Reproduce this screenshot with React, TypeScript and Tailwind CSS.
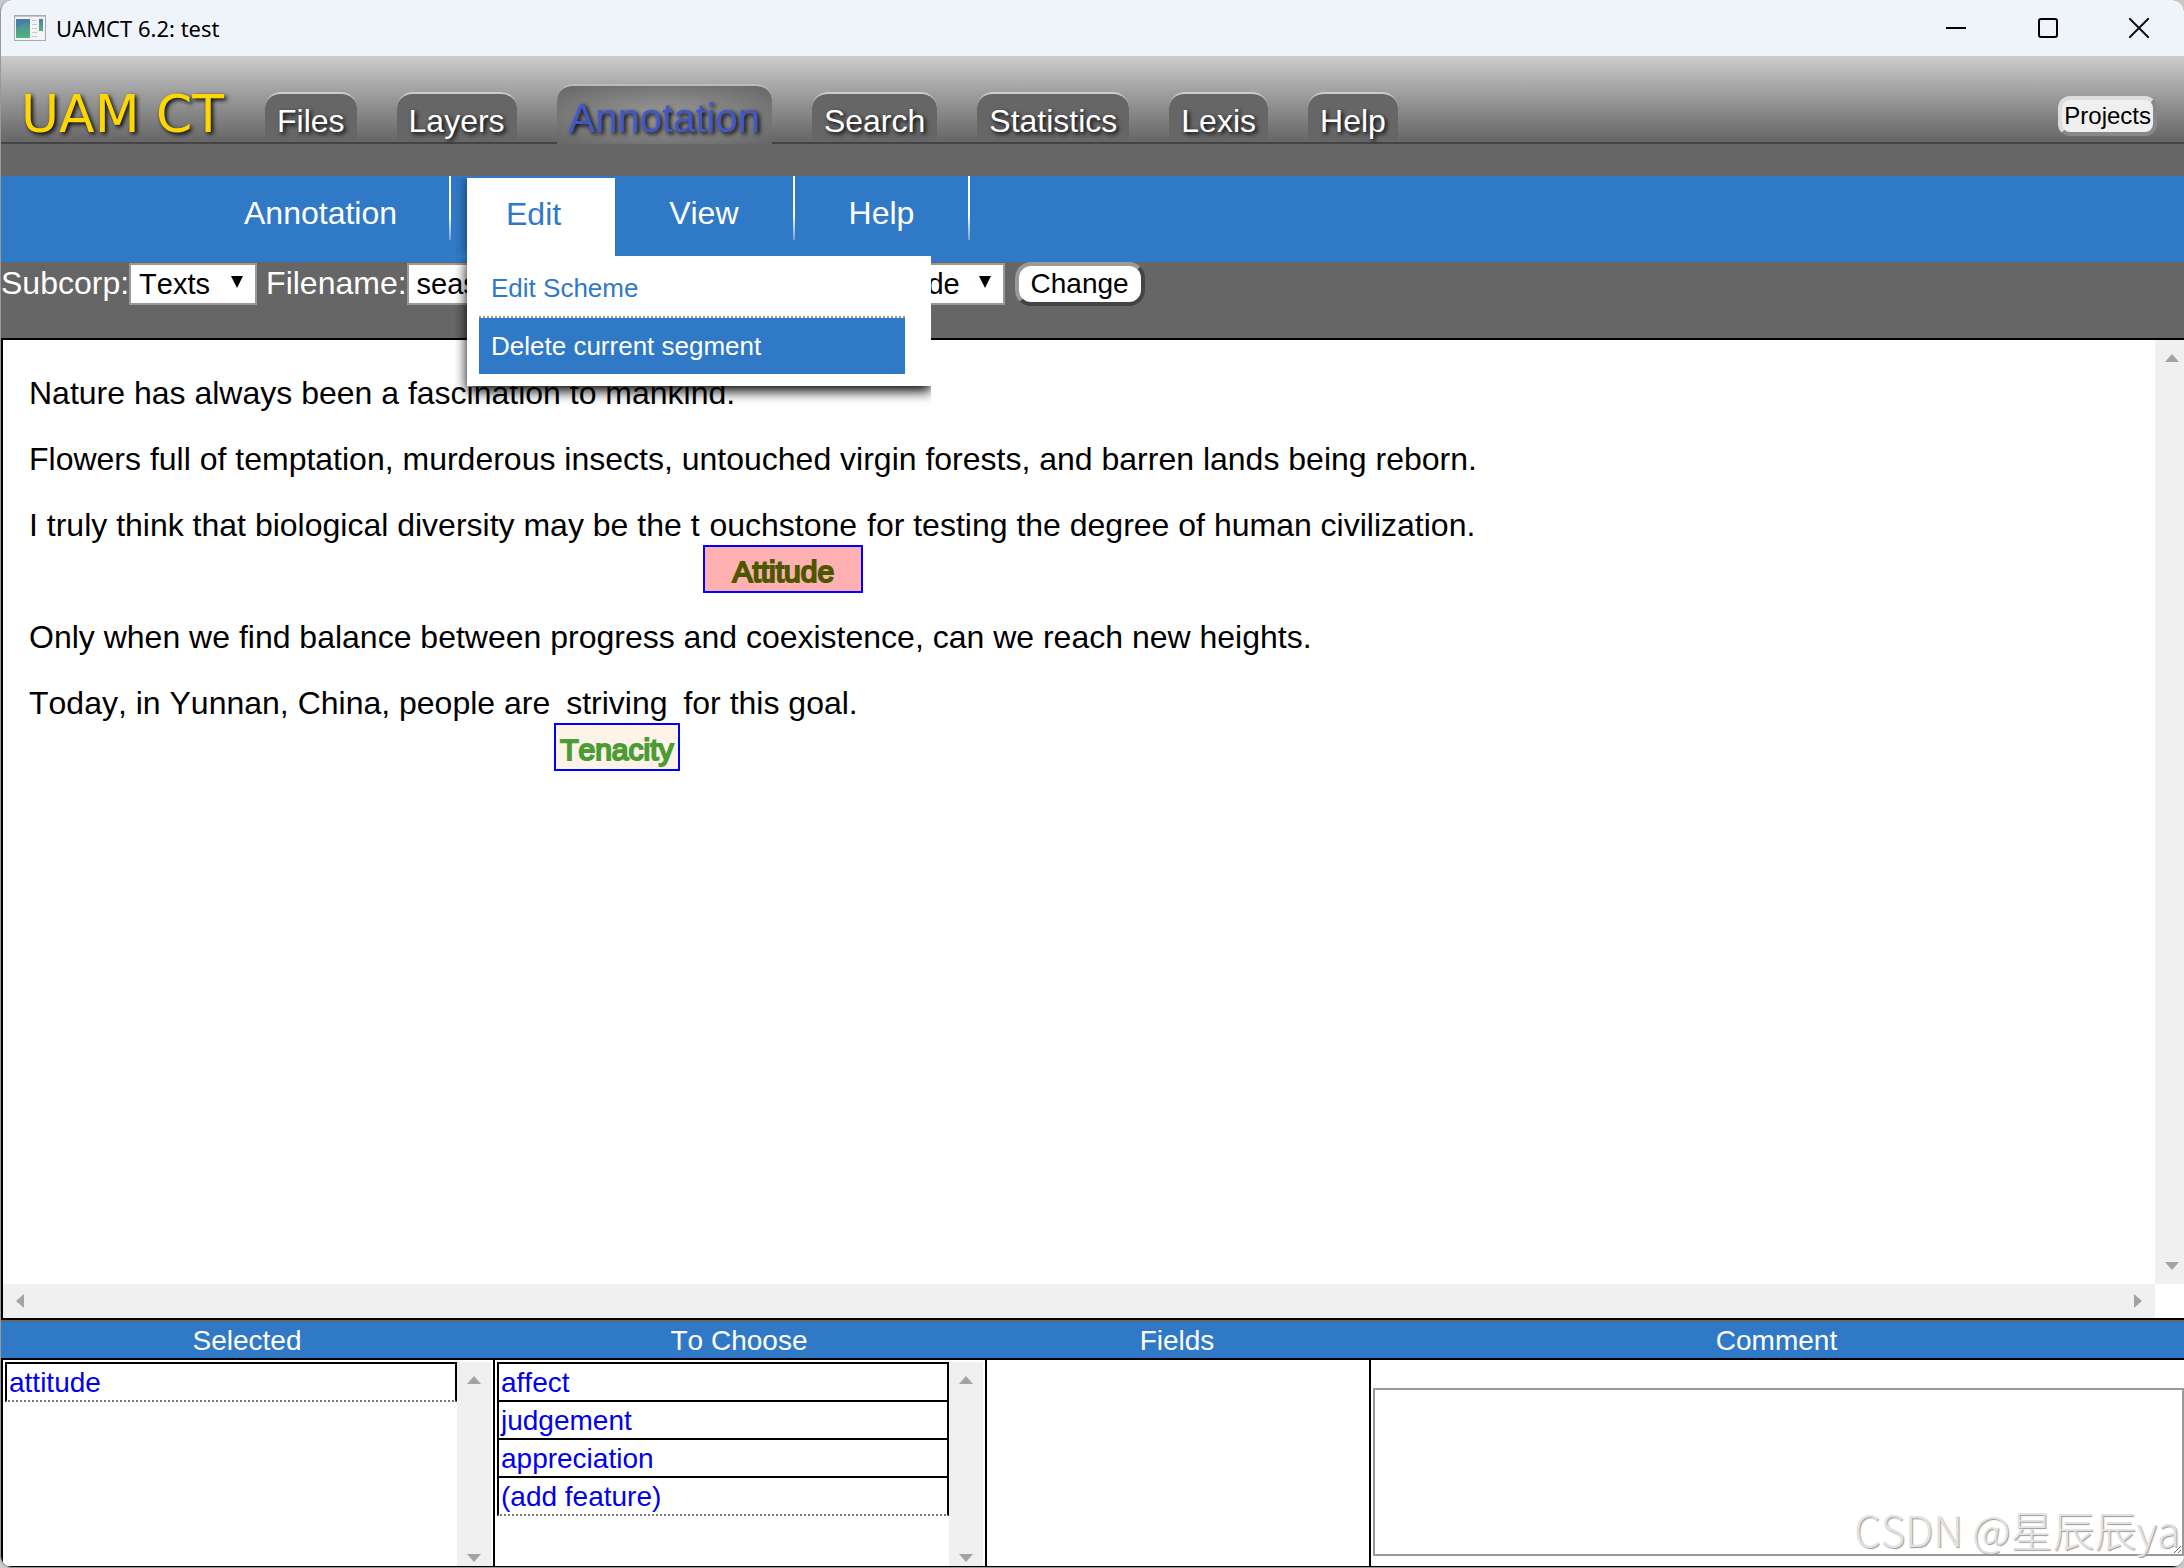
import { useState } from "react";

const tabs = ["Files", "Layers", "Annotation", "Search", "Statistics", "Lexis", "Help"];

const choices = ["affect", "judgement", "appreciation", "(add feature)"];

const WindowControls = () => (
  <div className="ml-auto flex h-full">
    <button type="button" aria-label="Minimize" className="flex w-[92px] items-center justify-center">
      <svg width="20" height="20" viewBox="0 0 20 20">
        <path d="M0 10H20" stroke="#000" strokeWidth="2" />
      </svg>
    </button>
    <button type="button" aria-label="Maximize" className="flex w-[92px] items-center justify-center">
      <svg width="20" height="20" viewBox="0 0 20 20">
        <rect x="1" y="1" width="18" height="18" rx="2" fill="none" stroke="#000" strokeWidth="2" />
      </svg>
    </button>
    <button type="button" aria-label="Close" className="flex w-[90px] items-center justify-center">
      <svg width="20" height="20" viewBox="0 0 20 20">
        <path d="M0 0L20 20M20 0L0 20" stroke="#111" strokeWidth="2" />
      </svg>
    </button>
  </div>
);

const AppIcon = () => (
  <svg width="32" height="26" viewBox="0 0 32 26">
    <defs>
      <linearGradient id="pane" x1="0" y1="0" x2="0" y2="1">
        <stop offset="0" stopColor="#4a80a8" />
        <stop offset="1" stopColor="#52b578" />
      </linearGradient>
    </defs>
    <rect x="0.5" y="0.5" width="31" height="25" fill="#f4f4f6" stroke="#a9abb0" />
    <path d="M1 1.5H31" stroke="#c4c6ca" />
    <rect x="2" y="4" width="14" height="19" fill="url(#pane)" />
    <path d="M2 14C5 9 10 8 16 8V4H2Z" fill="#3f7ba6" opacity="0.6" />
    <path d="M18 5.5H23M18 9.5H23M18 13.5H23M18 17.5H23M18 21.5H23" stroke="#c9cacd" />
    <rect x="25" y="4" width="4" height="12" fill="url(#pane)" />
  </svg>
);

const Arrow = ({ className }: { className: string }) => (
  <svg width="14" height="8" viewBox="0 0 14 8" className={className}>
    <path d="M0 8L7 0L14 8Z" fill="#a3a3a3" />
  </svg>
);

// Vertical scroll track with an arrow at each end
const VerticalTrack = () => (
  <div className="flex shrink-0 flex-col items-center justify-between bg-[#f0f0f0]">
    <Arrow className="mx-2.5 mt-3.5" />
    <Arrow className="mx-2.5 mb-1 rotate-180" />
  </div>
);

const Separator = () => (
  <span className="h-16 w-0.5 bg-linear-to-b from-white from-60% to-white/30" />
);

const SelectBox = ({
  id,
  label,
  width,
  value,
}: {
  id: string;
  label?: string;
  width: string;
  value: string;
}) => (
  <div className={`relative ${width}`}>
    <select
      id={id}
      aria-label={label}
      defaultValue={value}
      className="h-[42px] w-full appearance-none border-2 border-[#999] bg-white px-2 text-[29px] leading-[38px] text-black"
    >
      <option>{value}</option>
    </select>
    <svg
      width="12"
      height="12"
      viewBox="0 0 12 12"
      className="pointer-events-none absolute top-3.5 right-3.5"
    >
      <path d="M0 0H12L6 12Z" fill="#000" />
    </svg>
  </div>
);

const FeatureList = ({ items }: { items: string[] }) => (
  <div className="flex h-full pt-0.5 pr-0.5 pl-0.5">
    <ul className="grow self-start border-2 border-black border-b-[#777] [border-bottom-style:dotted]">
      {items.map((item) => (
        <li key={item} className="border-b-2 border-black last:border-b-0">
          <button
            type="button"
            className="block w-full px-0.5 pt-0.5 text-left leading-[34px] text-[#0000ee]"
          >
            {item}
          </button>
        </li>
      ))}
    </ul>
    <VerticalTrack />
  </div>
);

const Segment = ({
  text,
  label,
  labelClass,
}: {
  text: string;
  label: string;
  labelClass: string;
}) => (
  <span className="-mx-[5px] inline-flex flex-col text-center">
    <span className="px-1.5">{text}</span>
    <button
      type="button"
      className={`mt-px -mb-[3px] h-12 border-2 border-[#0000ff] px-1 text-[30px] leading-[50px] [-webkit-text-stroke:2px_currentColor] ${labelClass}`}
    >
      {label}
    </button>
  </span>
);

const App = () => {
  const [activeTab, setActiveTab] = useState("Annotation");
  const [comment, setComment] = useState("");

  return (
    <div className="bg-[#c8c8c8] font-['Liberation_Sans',Arial,sans-serif] [font-kerning:none]">
      <div className="relative flex min-h-screen flex-col overflow-hidden rounded-xl border-b border-l border-[#999] bg-[#666]">
        {/* Title bar */}
        <div className="flex h-14 items-center bg-[#eff4fb] pl-[13px]">
          <AppIcon />
          <span className="pl-2.5 font-['Noto_Sans',sans-serif] text-[22px] text-black">
            UAMCT 6.2: test
          </span>
          <WindowControls />
        </div>

        {/* Main tabs */}
        <header className="flex h-[88px] items-end border-b-2 border-[#444] bg-linear-to-b from-[#ccc] to-[#666] pr-[27px]">
          <h1 className="w-[264px] pb-px pl-5 font-['DejaVu_Sans',Verdana,sans-serif] text-[52px] leading-[54px] text-[#ffd700] [text-shadow:2px_2px_4px_#000]">
            UAM CT
          </h1>
          <nav className="flex items-end gap-10">
            {tabs.map((tab) => (
              <button
                key={tab}
                type="button"
                onClick={() => setActiveTab(tab)}
                className={
                  tab === activeTab
                    ? "-mb-0.5 rounded-t-2xl border-t-2 border-[#bbb] bg-[radial-gradient(#999,#666)] px-3 pt-1.5 text-[40px] leading-[52px] text-[#4059c6] [text-shadow:2px_2px_4px_#000]"
                    : "rounded-t-2xl border-t-2 border-[#ccc] bg-[#666] px-3 pt-1.5 text-[32px] leading-[42px] text-white [text-shadow:2px_2px_4px_#000]"
                }
              >
                {tab}
              </button>
            ))}
          </nav>
          <button
            type="button"
            className="mb-1.5 ml-auto h-10 rounded-xl border-4 border-t-[#ddd] border-r-[#888] border-b-[#888] border-l-[#ddd] bg-[#efefef] px-0.5 text-2xl leading-8 text-black"
          >
            Projects
          </button>
        </header>

        {/* Annotation menu */}
        <nav className="mt-8 flex h-[86px] items-start bg-[#3079c6] pl-[190px] text-[32px] leading-[74px] text-white">
          <button type="button" className="pr-[52px] pl-[53px]">
            Annotation
          </button>
          <Separator />
          <div className="relative z-10 mt-0.5 ml-4">
            <button
              type="button"
              className="relative z-10 block bg-white pr-[54px] pb-1.5 pl-[39px] leading-[72px] text-[#3079c6] shadow-[0_0_12px_rgba(0,0,0,0.6)] [clip-path:inset(0_0_0_-12px)]"
            >
              Edit
            </button>
            <ul className="absolute top-full left-0 w-[464px] bg-white pt-1 pr-[26px] pb-3 pl-3 text-[26px] leading-[56px] shadow-[0_5px_12px_#000] [clip-path:inset(0_0_-20px_-12px)]">
              <li className="border-b-2 border-dotted border-[#999]">
                <button type="button" className="w-full px-3 text-left text-[#3079c6]">
                  Edit Scheme
                </button>
              </li>
              <li>
                <button type="button" className="w-full bg-[#3079c6] px-3 text-left text-white">
                  Delete current segment
                </button>
              </li>
            </ul>
          </div>
          <button type="button" className="px-[54px]">
            View
          </button>
          <Separator />
          <button type="button" className="px-[54px]">
            Help
          </button>
          <Separator />
        </nav>

        {/* File selection */}
        <form
          className="flex h-[76px] items-start text-[32px] leading-[42px] text-white"
          onSubmit={(e) => e.preventDefault()}
        >
          <label htmlFor="subcorp">Subcorp:</label>
          <SelectBox id="subcorp" width="w-32" value="Texts" />
          <label htmlFor="filename" className="pl-[9px]">
            Filename:
          </label>
          <SelectBox id="filename" width="w-[400px]" value="season.txt" />
          <SelectBox id="layer" label="Layer" width="ml-12 w-[150px]" value="attitude" />
          <button
            type="submit"
            className="ml-2.5 h-11 rounded-2xl border-4 border-t-[#999] border-r-[#444] border-b-[#444] border-l-[#999] bg-white px-3 text-[28px] leading-9 text-black"
          >
            Change
          </button>
        </form>

        {/* Annotated text */}
        <main className="flex grow flex-col border-y-2 border-l-2 border-black bg-white">
          <div className="flex grow">
            <div className="grow space-y-7 pt-[34px] pl-[26px] text-[32px] leading-[38px] text-black">
              <p>Nature has always been a fascination to mankind.</p>
              <p>
                Flowers full of temptation, murderous insects, untouched virgin forests, and barren
                lands being reborn.
              </p>
              <p>
                I truly think that biological diversity may be the t{" "}
                <Segment
                  text="ouchstone"
                  label="Attitude"
                  labelClass="bg-[#ffb0b0] text-[#4d5700]"
                />{" "}
                for testing the degree of human civilization.
              </p>
              <p>
                Only when we find balance between progress and coexistence, can we reach new
                heights.
              </p>
              <p>
                Today, in Yunnan, China, people are{" "}
                <Segment
                  text="striving"
                  label="Tenacity"
                  labelClass="bg-[#fdf3e7] text-[#4a9c34]"
                />{" "}
                for this goal.
              </p>
            </div>
            <div className="flex w-[29px] shrink-0 flex-col items-center justify-between bg-[#f0f0f0]">
              <Arrow className="mt-3.5 ml-1" />
              <Arrow className="mb-3.5 ml-1 rotate-180" />
            </div>
          </div>
          <div className="mr-[29px] flex h-[34px] items-center justify-between bg-[#f0f0f0] px-2.5">
            <Arrow className="-rotate-90" />
            <Arrow className="rotate-90" />
          </div>
        </main>

        {/* Feature panels */}
        <div className="mt-0.5 grid grid-cols-[492fr_492fr_384fr_815fr] text-[28px]">
          {["Selected", "To Choose", "Fields", "Comment"].map((title) => (
            <h2
              key={title}
              className="border-b-2 border-black bg-[#3079c6] pt-0.5 text-center leading-[34px] text-white"
            >
              {title}
            </h2>
          ))}
          <section className="h-[207px] border-b border-l-2 border-black bg-white">
            <FeatureList items={["attitude"]} />
          </section>
          <section className="border-b border-l-2 border-black bg-white">
            <FeatureList items={choices} />
          </section>
          <section className="border-b border-l-2 border-black bg-white" />
          <section className="border-b border-l-2 border-black bg-white pt-7 pl-0.5">
            <textarea
              aria-label="Comment"
              value={comment}
              onChange={(e) => setComment(e.target.value)}
              className="block h-[168px] w-full border-2 border-[#999] bg-white text-black"
            />
          </section>
        </div>

        {/* Watermark */}
        <span className="pointer-events-none absolute right-1 bottom-2 font-['Noto_Sans_CJK_SC',sans-serif] text-[42px] leading-[60px] font-light text-[#e2e2e2] [text-shadow:1px_1px_1px_#999]">
          CSDN @星辰辰ya
        </span>
      </div>
    </div>
  );
};

export default App;
